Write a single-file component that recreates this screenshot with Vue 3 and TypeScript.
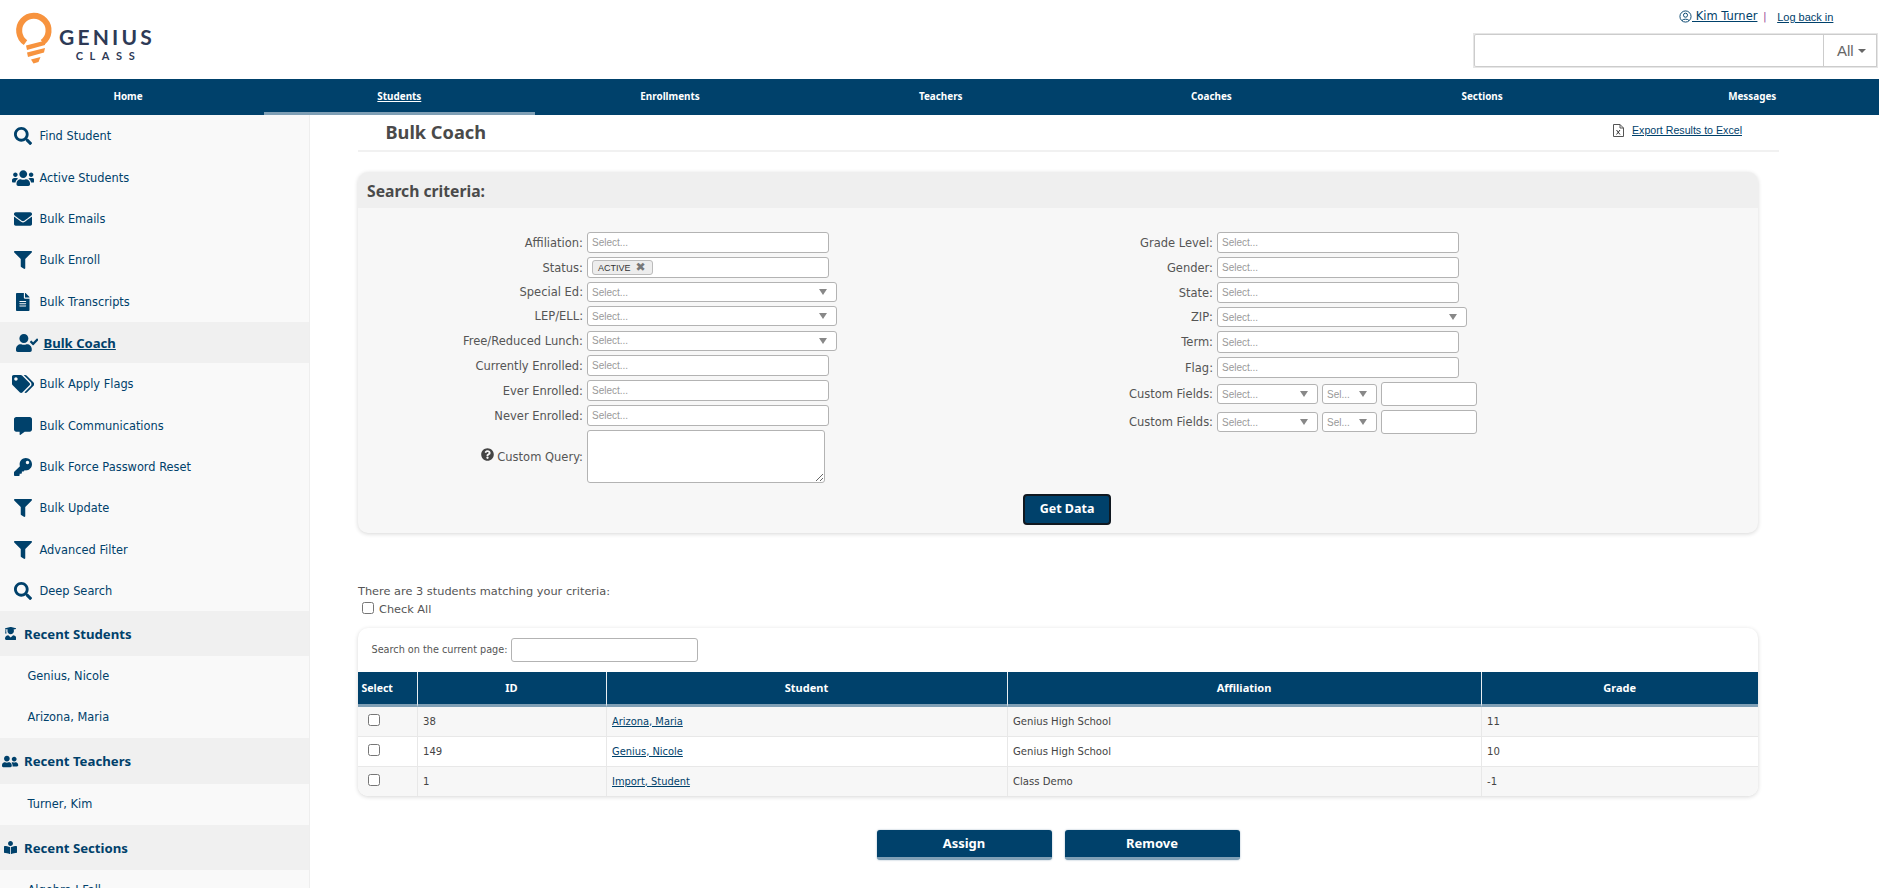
<script setup lang="ts">
interface SideItem {
  label: string;
  icon: string;
  active?: boolean;
}

interface Field {
  label: string;
  kind: 'text' | 'select' | 'custom' | 'status';
  size: string;
}

const icons: Record<string, { box: string; d: string }> = {
  search: { box: '0 0 512 512', d: 'M505 442.7L405.3 343c-4.5-4.5-10.6-7-17-7H372c27.6-35.3 44-79.7 44-128C416 93.1 322.9 0 208 0S0 93.1 0 208s93.1 208 208 208c48.3 0 92.7-16.4 128-44v16.3c0 6.4 2.5 12.5 7 17l99.7 99.7c9.4 9.4 24.6 9.4 33.9 0l28.3-28.3c9.4-9.4 9.4-24.6.1-34zM208 336c-70.7 0-128-57.2-128-128 0-70.7 57.2-128 128-128 70.7 0 128 57.2 128 128 0 70.7-57.2 128-128 128z' },
  users: { box: '0 0 640 512', d: 'M96 224c35.3 0 64-28.7 64-64s-28.7-64-64-64-64 28.7-64 64 28.7 64 64 64zm448 0c35.3 0 64-28.7 64-64s-28.7-64-64-64-64 28.7-64 64 28.7 64 64 64zm32 32h-64c-17.6 0-33.5 7.1-45.1 18.6 40.3 22.1 68.9 62 75.1 109.4h66c17.7 0 32-14.3 32-32v-32c0-35.3-28.7-64-64-64zm-256 0c61.9 0 112-50.1 112-112S381.9 32 320 32 208 82.1 208 144s50.1 112 112 112zm76.8 32h-8.3c-20.8 10-43.9 16-68.5 16s-47.6-6-68.5-16h-8.3C179.6 288 128 339.6 128 403.2V432c0 26.5 21.5 48 48 48h288c26.5 0 48-21.5 48-48v-28.8c0-63.6-51.6-115.2-115.2-115.2zm-223.7-13.4C161.5 263.1 145.6 256 128 256H64c-35.3 0-64 28.7-64 64v32c0 17.7 14.3 32 32 32h65.9c6.3-47.4 34.9-87.3 75.2-109.4z' },
  envelope: { box: '0 0 512 512', d: 'M502.3 190.8c3.9-3.1 9.7-.2 9.7 4.7V400c0 26.5-21.5 48-48 48H48c-26.5 0-48-21.5-48-48V195.6c0-5 5.7-7.8 9.7-4.7 22.4 17.4 52.1 39.5 154.1 113.6 21.1 15.4 56.7 47.8 92.2 47.6 35.7.3 72-32.8 92.3-47.6 102-74.1 131.6-96.3 154-113.7zM256 320c23.2.4 56.6-29.2 73.4-41.4 132.7-96.3 142.8-104.7 173.4-128.7 5.8-4.5 9.2-11.5 9.2-18.9v-19c0-26.5-21.5-48-48-48H48C21.5 64 0 85.5 0 112v19c0 7.4 3.4 14.3 9.2 18.9 30.6 23.9 40.7 32.4 173.4 128.7 16.8 12.2 50.2 41.8 73.4 41.4z' },
  filter: { box: '0 0 512 512', d: 'M487.976 0H24.028C2.71 0-8.047 25.866 7.058 40.971L192 225.941V432c0 7.831 3.821 15.17 10.237 19.662l80 55.98C298.02 518.69 320 507.493 320 487.98V225.941l184.947-184.97C520.021 25.896 509.338 0 487.976 0z' },
  file: { box: '0 0 384 512', d: 'M224 136V0H24C10.7 0 0 10.7 0 24v464c0 13.3 10.7 24 24 24h336c13.3 0 24-10.7 24-24V160H248c-13.2 0-24-10.8-24-24zm64 236c0 6.6-5.4 12-12 12H108c-6.6 0-12-5.4-12-12v-8c0-6.6 5.4-12 12-12h168c6.6 0 12 5.4 12 12v8zm0-64c0 6.6-5.4 12-12 12H108c-6.6 0-12-5.4-12-12v-8c0-6.6 5.4-12 12-12h168c6.6 0 12 5.4 12 12v8zm0-72v8c0 6.6-5.4 12-12 12H108c-6.6 0-12-5.4-12-12v-8c0-6.6 5.4-12 12-12h168c6.6 0 12 5.4 12 12zm96-114.1v6.1H256V0h6.1c6.4 0 12.5 2.5 17 7l97.9 98c4.5 4.5 7 10.6 7 16.9z' },
  userCheck: { box: '0 0 640 512', d: 'M224 256c70.7 0 128-57.3 128-128S294.7 0 224 0 96 57.3 96 128s57.3 128 128 128zm89.6 32h-16.7c-22.2 10.2-46.9 16-72.9 16s-50.6-5.8-72.9-16h-16.7C60.2 288 0 348.2 0 422.4V464c0 26.5 21.5 48 48 48h352c26.5 0 48-21.5 48-48v-41.6c0-74.2-60.2-134.4-134.4-134.4zm323-128.4l-27.8-28.1c-4.6-4.7-12.1-4.7-16.8-.1l-104.8 104-45.5-45.8c-4.6-4.7-12.1-4.7-16.8-.1l-28.1 27.9c-4.7 4.6-4.7 12.1-.1 16.8l81.7 82.3c4.6 4.7 12.1 4.7 16.8.1l141.3-140.2c4.6-4.7 4.7-12.2.1-16.8z' },
  tags: { box: '0 0 640 512', d: 'M497.941 225.941L286.059 14.059A48 48 0 0 0 252.118 0H48C21.49 0 0 21.49 0 48v204.118a48 48 0 0 0 14.059 33.941l211.882 211.882c18.744 18.745 49.136 18.746 67.882 0l204.118-204.118c18.745-18.745 18.745-49.137 0-67.882zM112 160c-26.51 0-48-21.49-48-48s21.49-48 48-48 48 21.49 48 48-21.49 48-48 48zm513.941 133.823L421.823 497.941c-18.745 18.745-49.137 18.745-67.882 0l-.36-.36L527.64 323.522c16.999-16.999 26.36-39.6 26.36-63.64s-9.362-46.641-26.36-63.64L331.397 0h48.721a48 48 0 0 1 33.941 14.059l211.882 211.882c18.745 18.745 18.745 49.137 0 67.882z' },
  comment: { box: '0 0 512 512', d: 'M448 0H64C28.7 0 0 28.7 0 64v288c0 35.3 28.7 64 64 64h96v84c0 9.8 11.2 15.5 19.1 9.7L304 416h144c35.3 0 64-28.7 64-64V64c0-35.3-28.7-64-64-64z' },
  key: { box: '0 0 512 512', d: 'M512 176.001C512 273.203 433.202 352 336 352c-11.22 0-22.19-1.062-32.827-3.069l-24.012 27.014A23.999 23.999 0 0 1 261.223 384H224v40c0 13.255-10.745 24-24 24h-40v40c0 13.255-10.745 24-24 24H24c-13.255 0-24-10.745-24-24v-78.059c0-6.365 2.529-12.47 7.029-16.971l161.802-161.802C163.108 213.814 160 195.271 160 176 160 78.798 238.797.001 335.999 0 433.488-.001 512 78.511 512 176.001zM336 128c0 26.51 21.49 48 48 48s48-21.49 48-48-21.49-48-48-48-48 21.49-48 48z' },
  graduate: { box: '0 0 448 512', d: 'M319.4 320.6L224 416l-95.4-95.4C57.1 323.7 0 382.2 0 454.4v9.6c0 26.5 21.5 48 48 48h352c26.5 0 48-21.5 48-48v-9.6c0-72.2-57.1-130.7-128.6-133.8zM13.6 79.8l6.4 1.5v58.4c-7 4.2-12 11.5-12 20.3 0 8.4 4.6 15.4 11.1 19.7L3.5 242c-1.7 6.9 2.1 14 7.6 14h41.8c5.5 0 9.3-7.1 7.6-14l-15.6-62.3C51.4 175.4 56 168.4 56 160c0-8.8-5-16.1-12-20.3V87.1l66 15.9c-8.6 17.2-14 36.4-14 57 0 70.7 57.3 128 128 128s128-57.3 128-128c0-20.6-5.3-39.8-14-57l96.3-23.2c18.2-4.4 18.2-27.1 0-31.5l-190.4-46c-13-3.1-26.7-3.1-39.7 0L13.6 48.2c-18.1 4.4-18.1 27.2 0 31.6z' },
  friends: { box: '0 0 640 512', d: 'M192 256c61.9 0 112-50.1 112-112S253.9 32 192 32 80 82.1 80 144s50.1 112 112 112zm76.8 32h-8.3c-20.8 10-43.9 16-68.5 16s-47.6-6-68.5-16h-8.3C51.6 288 0 339.6 0 403.2V432c0 26.5 21.5 48 48 48h288c26.5 0 48-21.5 48-48v-28.8c0-63.6-51.6-115.2-115.2-115.2zM480 256c53 0 96-43 96-96s-43-96-96-96-96 43-96 96 43 96 96 96zm48 32h-3.8c-13.9 4.8-28.6 8-44.2 8s-30.3-3.2-44.2-8H432c-20.4 0-39.2 5.9-55.7 15.4 24.4 26.3 39.7 61.2 39.7 99.8v38.4c0 2.2-.5 4.3-.6 6.4H592c26.5 0 48-21.5 48-48 0-61.9-50.1-112-112-112z' },
  reader: { box: '0 0 512 512', d: 'M352 96c0-53.02-42.98-96-96-96s-96 42.98-96 96 42.98 96 96 96 96-42.98 96-96zM233.59 241.1c-59.33-36.32-155.43-46.3-203.79-49.05C13.55 191.13 0 203.51 0 219.14v222.8c0 14.33 11.59 26.28 26.49 27.05 43.66 2.29 131.99 10.68 193.04 41.43 9.37 4.72 20.48-1.71 20.48-11.87V252.56c-.01-4.67-2.32-8.95-6.42-11.46zm248.61-49.05c-48.35 2.74-144.46 12.73-203.78 49.05-4.1 2.51-6.41 6.96-6.41 11.63v245.79c0 10.19 11.14 16.63 20.54 11.9 61.04-30.72 149.32-39.11 192.97-41.4 14.9-.78 26.49-12.73 26.49-27.06V219.14c-.01-15.63-13.56-28.01-29.81-27.09z' },
  question: { box: '0 0 512 512', d: 'M504 256c0 136.997-111.043 248-248 248S8 392.997 8 256C8 119.083 119.043 8 256 8s248 111.083 248 248zM262.655 90c-54.497 0-89.255 22.957-116.549 63.758-3.536 5.286-2.353 12.415 2.715 16.258l34.699 26.31c5.205 3.947 12.621 3.008 16.665-2.122 17.864-22.658 30.113-35.797 57.303-35.797 20.429 0 45.698 13.148 45.698 32.958 0 14.976-12.363 22.667-32.534 33.976C247.128 238.528 216 254.941 216 296v4c0 6.627 5.373 12 12 12h56c6.627 0 12-5.373 12-12v-1.333c0-28.462 83.186-29.647 83.186-106.667 0-58.002-60.165-102-116.531-102zM256 338c-25.365 0-46 20.635-46 46 0 25.364 20.635 46 46 46s46-20.636 46-46c0-25.365-20.635-46-46-46z' },
};

const tabs = ['Home', 'Students', 'Enrollments', 'Teachers', 'Coaches', 'Sections', 'Messages'];

const sideItems: SideItem[] = [
  { label: 'Find Student', icon: 'search' },
  { label: 'Active Students', icon: 'users' },
  { label: 'Bulk Emails', icon: 'envelope' },
  { label: 'Bulk Enroll', icon: 'filter' },
  { label: 'Bulk Transcripts', icon: 'file' },
  { label: 'Bulk Coach', icon: 'userCheck', active: true },
  { label: 'Bulk Apply Flags', icon: 'tags' },
  { label: 'Bulk Communications', icon: 'comment' },
  { label: 'Bulk Force Password Reset', icon: 'key' },
  { label: 'Bulk Update', icon: 'filter' },
  { label: 'Advanced Filter', icon: 'filter' },
  { label: 'Deep Search', icon: 'search' },
];

const recents = [
  { title: 'Recent Students', icon: 'graduate', names: ['Genius, Nicole', 'Arizona, Maria'] },
  { title: 'Recent Teachers', icon: 'friends', names: ['Turner, Kim'] },
  { title: 'Recent Sections', icon: 'reader', names: ['Algebra I Fall'] },
];

const leftFields: Field[] = [
  { label: 'Affiliation:', kind: 'text', size: 'h21' },
  { label: 'Status:', kind: 'status', size: 'h21' },
  { label: 'Special Ed:', kind: 'select', size: 'h20' },
  { label: 'LEP/ELL:', kind: 'select', size: 'h20' },
  { label: 'Free/Reduced Lunch:', kind: 'select', size: 'h21' },
  { label: 'Currently Enrolled:', kind: 'text', size: 'h21' },
  { label: 'Ever Enrolled:', kind: 'text', size: 'h21' },
  { label: 'Never Enrolled:', kind: 'text', size: 'h21' },
];

const rightFields: Field[] = [
  { label: 'Grade Level:', kind: 'text', size: 'h21' },
  { label: 'Gender:', kind: 'text', size: 'h21' },
  { label: 'State:', kind: 'text', size: 'h21' },
  { label: 'ZIP:', kind: 'select', size: 'h20' },
  { label: 'Term:', kind: 'text', size: 'h22' },
  { label: 'Flag:', kind: 'text', size: 'h21' },
  { label: 'Custom Fields:', kind: 'custom', size: 'h24' },
  { label: 'Custom Fields:', kind: 'custom', size: 'h24' },
];

const columns = ['Select', 'ID', 'Student', 'Affiliation', 'Grade'];

const students = [
  { id: '38', name: 'Arizona, Maria', affiliation: 'Genius High School', grade: '11' },
  { id: '149', name: 'Genius, Nicole', affiliation: 'Genius High School', grade: '10' },
  { id: '1', name: 'Import, Student', affiliation: 'Class Demo', grade: '-1' },
];
</script>

<template>
  <div class="page">
    <header class="top">
      <a class="logo">
        <svg class="bulb" viewBox="14 11 40 54" width="40" height="54" aria-hidden="true">
          <path d="M25.5 42.6 A14.7 14.7 0 1 1 42.5 42.4" fill="none" stroke="#f7933e" stroke-width="6" />
          <path d="M26 45.500 L45.500 40.500 L45 45 L27 50 Z M27 52.500 L45 48 L44 52.500 L28 57 Z M31 59.500 L40.500 57 L38.500 62 L33.500 63.500 Z" fill="#f7933e" />
        </svg>
        <span class="logo-text">
          <span class="logo-main">GENIUS</span>
          <span class="logo-sub">CLASS</span>
        </span>
      </a>
      <div class="top-right">
        <div class="user-line">
          <svg class="user-icon" viewBox="0 0 14 14" width="13" height="13" aria-hidden="true">
            <circle cx="7" cy="7" r="6" fill="none" stroke="#00416b" stroke-width="1" />
            <circle cx="7" cy="5.600" r="2.200" fill="none" stroke="#00416b" stroke-width="1" />
            <path d="M3.200 11.400 C4 9.400 10 9.400 10.800 11.400" fill="none" stroke="#00416b" stroke-width="1" />
          </svg>
          <a class="user-name">&nbsp;Kim Turner</a>
          <span class="pipe">|</span>
          <a class="logback">Log back in</a>
        </div>
        <div class="top-search">
          <div class="top-input"></div>
          <div class="top-all">All<i class="caret"></i></div>
        </div>
      </div>
    </header>

    <nav class="tabs">
      <a
        v-for="tab in tabs"
        :key="tab"
        class="tab"
        :class="{ current: tab === 'Students' }"
      >{{ tab }}</a>
    </nav>

    <div class="body">
      <aside class="side">
        <a
          v-for="item in sideItems"
          :key="item.label"
          class="side-item"
          :class="{ active: item.active }"
        >
          <span class="side-icon">
            <svg :viewBox="icons[item.icon].box" height="18" fill="#00416b" aria-hidden="true">
              <path :d="icons[item.icon].d" />
            </svg>
          </span>
          <span class="side-label">{{ item.label }}</span>
        </a>
        <template v-for="group in recents" :key="group.title">
          <div class="side-head">
            <span class="head-icon">
              <svg :viewBox="icons[group.icon].box" height="13" fill="#00416b" aria-hidden="true">
                <path :d="icons[group.icon].d" />
              </svg>
            </span>
            {{ group.title }}
          </div>
          <a v-for="name in group.names" :key="name" class="side-name">{{ name }}</a>
        </template>
      </aside>

      <main class="content">
        <div class="title-row">
          <h1 class="title">Bulk Coach</h1>
          <a class="export">
            <svg viewBox="0 0 11 13" width="11" height="13" aria-hidden="true">
              <path d="M.5.5h6.500l3.500 3.500v8.500h-10z M7 .5v3.500h3.500" fill="#fff" stroke="#555" stroke-width="1" />
              <path d="M3.500 6l3.500 4.500M7 6l-3.500 4.500" stroke="#333" stroke-width="1" fill="none" />
            </svg>
            <span>Export Results to Excel</span>
          </a>
        </div>

        <section class="panel">
          <h2 class="panel-head">Search criteria:</h2>
          <div class="form">
            <div class="form-col">
              <div v-for="f in leftFields" :key="f.label" class="row" :class="f.size">
                <label class="row-label">{{ f.label }}</label>
                <div v-if="f.kind === 'text'" class="box text"><span class="ph">Select...</span></div>
                <div v-else-if="f.kind === 'status'" class="box text">
                  <span class="chip">ACTIVE<b class="chip-x">✖</b></span>
                </div>
                <div v-else class="box select"><span class="ph">Select...</span><i class="arrow"></i></div>
              </div>
              <div class="row query">
                <label class="row-label">
                  <svg :viewBox="icons.question.box" width="13" height="13" fill="#444" aria-hidden="true">
                    <path :d="icons.question.d" />
                  </svg>
                  Custom Query:
                </label>
                <textarea class="area"></textarea>
              </div>
            </div>
            <div class="form-col">
              <div v-for="(f, i) in rightFields" :key="i" class="row" :class="f.size">
                <label class="row-label">{{ f.label }}</label>
                <div v-if="f.kind === 'text'" class="box text"><span class="ph">Select...</span></div>
                <div v-else-if="f.kind === 'select'" class="box select"><span class="ph">Select...</span><i class="arrow"></i></div>
                <template v-else>
                  <div class="box sel-a"><span class="ph">Select...</span><i class="arrow"></i></div>
                  <div class="box sel-b"><span class="ph">Sel...</span><i class="arrow"></i></div>
                  <input class="free" type="text" />
                </template>
              </div>
            </div>
          </div>
          <div class="get-row">
            <button class="get-data" type="button">Get Data</button>
          </div>
        </section>

        <p class="count">There are 3 students matching your criteria:</p>
        <label class="check-all"><input type="checkbox" />Check All</label>

        <section class="panel grid-panel">
          <div class="page-search">
            <label>Search on the current page:</label>
            <input type="text" />
          </div>
          <table class="results">
            <colgroup>
              <col class="c-select" />
              <col class="c-id" />
              <col class="c-student" />
              <col class="c-aff" />
              <col />
            </colgroup>
            <thead>
              <tr>
                <th v-for="col in columns" :key="col">{{ col }}</th>
              </tr>
            </thead>
            <tbody>
              <tr v-for="s in students" :key="s.id">
                <td class="cell-check"><input type="checkbox" /></td>
                <td>{{ s.id }}</td>
                <td><a class="link">{{ s.name }}</a></td>
                <td>{{ s.affiliation }}</td>
                <td>{{ s.grade }}</td>
              </tr>
            </tbody>
          </table>
        </section>

        <div class="actions">
          <button class="action" type="button">Assign</button>
          <button class="action" type="button">Remove</button>
        </div>
      </main>
    </div>
  </div>
</template>

<style>
html, body {
  margin: 0;
  height: 100%;
  overflow: hidden;
  background: #fff;
}
</style>

<style scoped>
.page {
  height: 888px;
  overflow: hidden;
  font-family: "DejaVu Sans", sans-serif;
  font-size: 11px;
  color: #555;
}

.top {
  height: 79px;
  display: flex;
  justify-content: space-between;
}
.logo {
  display: flex;
  align-items: flex-start;
  padding: 11px 0 0 14px;
}
.bulb { flex: none; }
.logo-text {
  display: flex;
  flex-direction: column;
  align-items: center;
  margin: 14px 0 0 5px;
  color: #2e3a56;
  font-family: Lato, sans-serif;
}
.logo-main {
  font-size: 21px;
  line-height: 24px;
  font-weight: 700;
  letter-spacing: 3.2px;
}
.logo-sub {
  font-size: 11px;
  line-height: 14px;
  font-weight: 700;
  letter-spacing: 6.6px;
  margin-right: -3px;
}
.top-right {
  width: 406px;
  display: flex;
  flex-direction: column;
}
.user-line {
  height: 33px;
  display: flex;
  align-items: flex-start;
  padding: 10px 0 0 206px;
  box-sizing: border-box;
  color: #00416b;
}
.user-icon { flex: none; }
.user-name {
  font-size: 11.5px;
  line-height: 13px;
  text-decoration: underline;
}
.pipe {
  color: #a0509a;
  font-size: 11px;
  line-height: 13px;
  margin: 0 10.5px 0 5.5px;
}
.logback {
  font-family: "Liberation Sans", sans-serif;
  font-size: 11px;
  line-height: 15px;
  text-decoration: underline;
}
.top-search {
  width: 405px;
  height: 35px;
  box-sizing: border-box;
  display: flex;
  border: 1px solid #e6e6e6;
  background: #fff;
}
.top-input {
  flex: 1;
  border: 1px solid #ccc;
  border-right: none;
  border-radius: 2px 0 0 2px;
}
.top-all {
  width: 54px;
  box-sizing: border-box;
  border: 1px solid #ccc;
  padding-left: 13px;
  display: flex;
  align-items: center;
  gap: 4px;
  font-family: "Liberation Sans", sans-serif;
  font-size: 15px;
  color: #666;
}
.caret {
  border-left: 4px solid transparent;
  border-right: 4px solid transparent;
  border-top: 4px solid #666;
}

.tabs {
  height: 36px;
  display: grid;
  grid-template-columns: 264px repeat(5, 270.7px) 1fr;
  background: #00416b;
}
.tab {
  display: flex;
  align-items: center;
  justify-content: center;
  padding-bottom: 3px;
  box-sizing: border-box;
  color: #fff;
  font-family: "Noto Sans", sans-serif;
  font-size: 9.9px;
  font-weight: 700;
}
.tab:first-child { padding-right: 8px; }
.tab:last-child { padding-left: 8px; }
.tab.current {
  text-decoration: underline;
  border-bottom: 3px solid #7f9fb5;
  padding-bottom: 0;
}

.body {
  display: flex;
}
.side {
  width: 310px;
  flex: none;
  box-sizing: border-box;
  height: 773px;
  overflow: hidden;
  background: #f9f9f9;
  border-right: 1px solid #eee;
  color: #00416b;
}
.side-item {
  height: 41.33px;
  box-sizing: border-box;
  display: flex;
  align-items: center;
  padding: 1.5px 0 0 11px;
  gap: 4.5px;
}
.side-icon {
  width: 24px;
  display: flex;
  justify-content: center;
}
.side-label { font-size: 11.4px; }
.side-item.active {
  background: #f0f0f0;
  padding-left: 15px;
}
.side-item.active .side-label {
  font-family: "Noto Sans", sans-serif;
  font-size: 13.1px;
  font-weight: 700;
  text-decoration: underline;
}
.side-head {
  height: 45.5px;
  display: flex;
  align-items: center;
  padding-left: 2px;
  background: #f0f0f0;
  font-family: "Noto Sans", sans-serif;
  font-size: 13.2px;
  font-weight: 700;
}
.head-icon {
  width: 17px;
  margin-right: 5px;
  display: flex;
  justify-content: center;
}
.side-name {
  height: 41px;
  box-sizing: border-box;
  display: flex;
  align-items: center;
  padding: 0 0 1px 27.5px;
  font-size: 11.4px;
}

.content {
  flex: 1;
  min-width: 0;
  padding: 0 100px 0 48px;
}
.title-row {
  height: 37px;
  box-sizing: border-box;
  border-bottom: 2px solid #f1f1f1;
  display: flex;
  justify-content: space-between;
  padding: 0 37px 0 27.5px;
}
.title {
  margin: 0;
  font-family: "Noto Sans", sans-serif;
  font-size: 18.2px;
  line-height: 34px;
  font-weight: 700;
  color: #4a4a4a;
}
.export {
  display: flex;
  align-items: center;
  gap: 8.5px;
  height: 30px;
  font-family: "Liberation Sans", sans-serif;
  font-size: 10.65px;
  color: #00416b;
}
.export span { text-decoration: underline; }

.panel {
  width: 1400px;
  margin-top: 20px;
  border-radius: 10px;
  background: #f7f7f7;
  box-shadow: 0 1px 4px rgba(0, 0, 0, 0.16);
  overflow: hidden;
}
.panel-head {
  margin: 0;
  height: 36px;
  box-sizing: border-box;
  padding-left: 9px;
  background: #efefef;
  font-family: "Noto Sans", sans-serif;
  font-size: 15.7px;
  line-height: 38px;
  font-weight: 700;
  color: #4a4a4a;
}
.form {
  display: grid;
  grid-template-columns: 630px 1fr;
  padding-top: 24px;
}
.row {
  display: flex;
  align-items: center;
  gap: 4px;
  margin-bottom: 4px;
}
.h20 { height: 20px; }
.h21 { height: 21px; }
.h22 { height: 22px; }
.h24 { height: 24px; }
.row-label {
  width: 225px;
  flex: none;
  text-align: right;
  font-size: 11.5px;
  color: #555;
  white-space: nowrap;
}
.box {
  box-sizing: border-box;
  height: 100%;
  background: #fff;
  border: 1px solid #b3b3b3;
  border-radius: 3px;
  display: flex;
  align-items: center;
  padding-left: 4px;
  position: relative;
}
.text { width: 241.5px; }
.select { width: 249.5px; height: 20px; }
.sel-a { width: 101px; height: 20px; }
.sel-b { width: 55px; height: 20px; }
.ph {
  font-family: "Liberation Sans", sans-serif;
  font-size: 10px;
  color: #999;
}
.arrow {
  position: absolute;
  right: 9px;
  top: 6px;
  border-left: 4px solid transparent;
  border-right: 4px solid transparent;
  border-top: 6px solid #888;
}
.chip {
  display: flex;
  align-items: center;
  height: 15px;
  box-sizing: border-box;
  padding-left: 5px;
  width: 61px;
  background: #ededed;
  border: 1px solid #bbb;
  border-radius: 3px;
  font-family: "Liberation Sans", sans-serif;
  font-size: 9px;
  color: #333;
}
.chip-x {
  margin-left: 5px;
  font-family: "DejaVu Sans", sans-serif;
  font-size: 12px;
  line-height: 13px;
  color: #777;
}
.free {
  width: 96px;
  height: 24px;
  box-sizing: border-box;
  border: 1px solid #b3b3b3;
  border-radius: 3px;
  background: #fff;
  padding: 0;
}
.query {
  align-items: center;
  margin-bottom: 0;
}
.area {
  display: block;
  width: 237.5px;
  height: 52.5px;
  box-sizing: border-box;
  border: 1px solid #b3b3b3;
  border-radius: 3px;
  background: #fff;
  padding: 0;
  margin: 0;
}
.get-row {
  display: flex;
  justify-content: center;
  padding: 11px 0 8px 18px;
}
.get-data {
  width: 88px;
  height: 31px;
  border: 2px solid #101820;
  border-radius: 4px;
  background: #00416b;
  color: #fff;
  font-family: "Noto Sans", sans-serif;
  font-size: 12.5px;
  font-weight: 700;
  padding: 0 0 2px;
}

.count {
  margin: 51px 0 0;
  font-size: 11.35px;
  line-height: 15px;
}
.check-all {
  display: flex;
  align-items: center;
  height: 15px;
  font-size: 11.3px;
  margin-top: 3px;
}
.check-all input {
  width: 12px;
  height: 12px;
  margin: 0 5px 3px 4px;
}
.grid-panel {
  margin-top: 11px;
  background: #fff;
  height: 168px;
}
.page-search {
  height: 44px;
  display: flex;
  align-items: center;
  padding-left: 13.5px;
  gap: 4px;
  font-size: 9.7px;
  color: #555;
}
.page-search input {
  width: 187px;
  height: 24px;
  box-sizing: border-box;
  border: 1px solid #b3b3b3;
  border-radius: 3px;
  padding: 0;
}
.results {
  width: 100%;
  table-layout: fixed;
  border-collapse: separate;
  border-spacing: 0;
}
.c-select { width: 59.5px; }
.c-id { width: 189px; }
.c-student { width: 401px; }
.c-aff { width: 474px; }
.results th {
  height: 35px;
  box-sizing: border-box;
  padding: 0;
  background: #00416b;
  border-bottom: 3px solid #7f9fb5;
  border-right: 1px solid #e8eef2;
  color: #fff;
  font-family: "Noto Sans", sans-serif;
  font-size: 11px;
  font-weight: 700;
}
.results th:first-child {
  text-align: left;
  padding-left: 3.5px;
  font-size: 10.5px;
}
.results th:last-child { border-right: none; }
.results td {
  height: 30px;
  box-sizing: border-box;
  padding: 0 0 0 5.5px;
  border-bottom: 1px solid #e8e8e8;
  border-right: 1px solid #e8e8e8;
  font-size: 10.1px;
  color: #444;
}
.results td:last-child { border-right: none; }
.results tbody tr:nth-child(odd) td { background: #f7f7f7; }
.results .cell-check { padding-left: 9.5px; }
.cell-check input {
  display: block;
  width: 12px;
  height: 12px;
  margin: 0 0 2px;
}
.link {
  color: #00416b;
  font-size: 9.9px;
  text-decoration: underline;
}

.actions {
  display: flex;
  gap: 13px;
  width: 1400px;
  justify-content: center;
  margin-top: 34px;
}
.action {
  width: 175px;
  height: 30px;
  border: none;
  border-bottom: 3px solid #7f9fb5;
  border-radius: 3px;
  background: #00416b;
  color: #fff;
  font-family: "Noto Sans", sans-serif;
  font-size: 13px;
  font-weight: 700;
  box-shadow: 0 0 2px rgba(0, 65, 107, 0.4);
  padding: 0;
}
</style>
